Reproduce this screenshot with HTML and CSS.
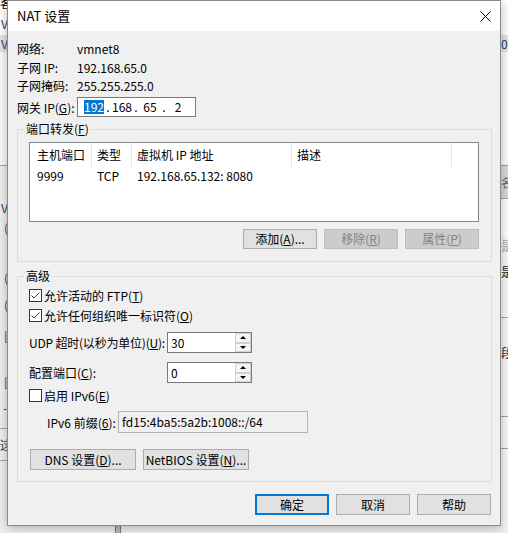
FILE: index.html
```html
<!DOCTYPE html>
<html lang="zh-CN">
<head>
<meta charset="utf-8">
<title>NAT 设置</title>
<link rel="stylesheet" href="styles.css">
</head>
<body>
<div class="desk">
  <div class="backwin">
    <div class="bw-top">
      <div class="bw-l bw-cut">客</div>
      <div class="bw-l bw-blue bw-v1">V</div>
    </div>
    <div class="bw-band">
      <span class="bw-l bw-blue">V</span>
      <span class="bw-r">0</span>
    </div>
    <div class="bw-white"></div>
    <div class="bw-sep"></div>
    <div class="bw-mid">
      <div class="bw-lcol">
        <div class="lc lc-v bw-blue">V</div>
        <div class="lc lc-p1">(</div>
        <div class="lc lc-p2">(</div>
        <div class="lc lc-p3">(</div>
        <div class="lc lc-b1">[</div>
        <div class="lc lc-b2">[</div>
        <div class="lc lc-d">-</div>
        <div class="lc-zh">这</div>
      </div>
      <div class="bw-rcol">
        <div class="rc rc-name">名</div>
        <div class="rc rc-gap"></div>
        <div class="rc rc-faded">是</div>
        <div class="rc rc-dark">是</div>
        <div class="rc rc-line"></div>
        <div class="rc rc-seg">段</div>
        <div class="rc rc-line2"></div>
        <div class="rc rc-line3"></div>
      </div>
    </div>
    <div class="bw-bottom"><span class="bw-bar"></span></div>
  </div>

  <div class="dialog">
    <div class="titlebar">
      <span class="title">NAT 设置</span>
      <svg class="close" width="11" height="11" viewBox="0 0 11 11"><path d="M0.5 0.5L10.5 10.5M10.5 0.5L0.5 10.5" stroke="#000" stroke-width="1" fill="none"/></svg>
    </div>
    <div class="content">
      <div class="info">
        <div class="kv r1"><span class="k">网络:</span><span class="v">vmnet8</span></div>
        <div class="kv r2"><span class="k">子网 IP:</span><span class="v">192.168.65.0</span></div>
        <div class="kv r3"><span class="k">子网掩码:</span><span class="v">255.255.255.0</span></div>
        <div class="kv r4"><span class="k">网关 IP(<u>G</u>):</span>
          <div class="ipbox"><span class="oct sel">192</span><span class="dot">.</span><span class="oct">168</span><span class="dot">.</span><span class="oct">65</span><span class="dot">.</span><span class="oct">2</span></div>
        </div>
      </div>

      <fieldset class="group g1">
        <legend>端口转发(<u>F</u>)</legend>
        <div class="list">
          <div class="lrow head"><span>主机端口</span><span>类型</span><span>虚拟机 IP 地址</span><span>描述</span><span class="last"></span></div>
          <div class="lrow item"><span>9999</span><span>TCP</span><span>192.168.65.132: 8080</span><span></span><span class="last"></span></div>
        </div>
        <div class="btnrow">
          <button class="btn">添加(<u>A</u>)...</button>
          <button class="btn" disabled>移除(<u>R</u>)</button>
          <button class="btn" disabled>属性(<u>P</u>)</button>
        </div>
      </fieldset>

      <fieldset class="group g2">
        <legend>高级</legend>
        <div class="cbrow cb1">
          <span class="cb"><svg width="11" height="11" viewBox="0 0 11 11"><path d="M1.5 5.5L4 8L9.5 2.5" stroke="#444" stroke-width="1" fill="none"/></svg></span>
          <span class="cblabel">允许活动的 FTP(<u>T</u>)</span>
        </div>
        <div class="cbrow cb2">
          <span class="cb"><svg width="11" height="11" viewBox="0 0 11 11"><path d="M1.5 5.5L4 8L9.5 2.5" stroke="#444" stroke-width="1" fill="none"/></svg></span>
          <span class="cblabel">允许任何组织唯一标识符(<u>O</u>)</span>
        </div>
        <div class="formrow fr-udp">
          <span class="flabel tight">UDP 超时(以秒为单位)(<u>U</u>):</span>
          <div class="spin"><span class="spinval">30</span><span class="spinbtns"><span class="sb up"></span><span class="sb down"></span></span></div>
        </div>
        <div class="formrow fr-port">
          <span class="flabel">配置端口(<u>C</u>):</span>
          <div class="spin"><span class="spinval">0</span><span class="spinbtns"><span class="sb up"></span><span class="sb down"></span></span></div>
        </div>
        <div class="cbrow cb3">
          <span class="cb"></span>
          <span class="cblabel">启用 IPv6(<u>E</u>)</span>
        </div>
        <div class="formrow fr-v6">
          <span class="flabel v6label">IPv6 前缀(<u>6</u>):</span>
          <div class="v6box">fd15:4ba5:5a2b:1008::/64</div>
        </div>
        <div class="btnrow2">
          <button class="btn wide">DNS 设置(<u>D</u>)...</button>
          <button class="btn wide">NetBIOS 设置(<u>N</u>)...</button>
        </div>
      </fieldset>

      <div class="footer">
        <button class="btn default">确定</button>
        <button class="btn">取消</button>
        <button class="btn">帮助</button>
      </div>
    </div>
  </div>
</div>
</body>
</html>
```

FILE: styles.css
```css
* { box-sizing: border-box; }
html, body { margin: 0; padding: 0; }
body {
  width: 508px;
  height: 533px;
  overflow: hidden;
  font-family: "Noto Sans CJK SC", "Liberation Sans", sans-serif;
  font-size: 12px;
  color: #000;
  background: #f0f0f0;
}
u { text-decoration: underline; text-underline-offset: 1px; }

.desk { position: relative; width: 508px; height: 533px; overflow: hidden; }

/* ---------- background window (mostly hidden behind the dialog) ---------- */
.backwin { display: flex; flex-direction: column; width: 508px; height: 533px; }
.bw-top { height: 35px; background: #fff; }
.bw-l { display: block; padding-left: 1px; white-space: nowrap; }
.bw-cut { height: 12px; line-height: 12px; margin-top: -3px; padding-left: 0; }
.bw-v1 { margin-top: 8px; line-height: 14px; }
.bw-blue { color: #1d3f7a; }
.bw-band { height: 17px; background: #e3e3e3; display: flex; justify-content: space-between; align-items: center; }
.bw-r { padding-left: 1px; width: 8px; color: #1d3f7a; }
.bw-white { height: 113px; background: #fbfbfb; }
.bw-sep { height: 1px; background: #a0a0a0; }
.bw-mid { height: 359px; display: flex; justify-content: space-between; background: #f0f0f0; }
.bw-lcol { width: 8px; display: flex; flex-direction: column; color: #444; }
.lc { line-height: 14px; padding-left: 4px; white-space: nowrap; }
.lc-v { margin-top: 35px; padding-left: 1px; }
.lc-p1 { margin-top: 6px; }
.lc-p2 { margin-top: 36px; }
.lc-p3 { margin-top: 13px; }
.lc-b1 { margin-top: 17px; }
.lc-b2 { margin-top: 32px; }
.lc-d { margin-top: 12px; padding-left: 3px; }
.lc-zh { margin-top: 13px; height: 33px; line-height: 31px; border-top: 1px solid #a8a8a8; border-bottom: 1px solid #a8a8a8; padding-left: 0; white-space: nowrap; }
.bw-rcol { width: 8px; display: flex; flex-direction: column; background: #f7f7f7; }
.rc { padding-left: 1px; white-space: nowrap; }
.rc-name { height: 33px; line-height: 33px; background: #d9d9d9; color: #666; border-bottom: 1px solid #a0a0a0; }
.rc-gap { height: 38px; background: #fff; }
.rc-faded { line-height: 18px; color: #a8a8a8; }
.rc-dark { margin-top: 8px; line-height: 18px; color: #222; }
.rc-line { margin-top: 36px; height: 1px; background: #a0a0a0; }
.rc-seg { margin-top: 28px; line-height: 14px; color: #222; }
.rc-line2 { margin-top: 56px; height: 1px; background: #a0a0a0; }
.rc-line3 { margin-top: 31px; height: 1px; background: #a0a0a0; }
.bw-bottom { height: 8px; background: #f0f0f0; padding-left: 115px; }
.bw-bar { display: block; width: 6px; height: 8px; background: #b9bdc9; border-left: 1px solid #6e7382; border-right: 1px solid #6e7382; }

/* ---------- dialog ---------- */
.dialog {
  position: absolute;
  left: 7px;
  top: 0;
  width: 494px;
  height: 526px;
  border: 1px solid #8b8b8b;
  background: #f0f0f0;
  box-shadow: 0 2px 10px rgba(0, 0, 0, 0.28);
  display: flex;
  flex-direction: column;
}
.titlebar {
  height: 30px;
  background: #fff;
  display: flex;
  align-items: center;
  justify-content: space-between;
  padding: 0 9px 0 9px;
}
.title { font-size: 13px; line-height: 16px; }
.close { display: block; }

.content { padding-top: 8px; display: flex; flex-direction: column; }

.info { margin-left: 9px; display: flex; flex-direction: column; }
.kv { display: flex; align-items: center; }
.k { width: 60px; flex: none; white-space: nowrap; }
.r1 { height: 19px; }
.r2 { height: 18px; }
.r3 { height: 18px; }
.r4 { height: 20px; margin-top: 3px; }
.ipbox {
  width: 119px;
  height: 20px;
  border: 1px solid #7a7a7a;
  background: #fff;
  display: flex;
  align-items: center;
  padding-left: 6px;
}
.oct { width: 20px; text-align: center; line-height: 14px; }
.oct.sel { background: #0078d7; color: #fff; }
.dot { width: 8px; text-align: center; line-height: 14px; }

.group {
  margin: 0 8px 0 9px;
  width: 475px;
  border: 1px solid #dcdcdc;
  min-inline-size: 0;
}
.group legend {
  line-height: 16px;
  padding: 0 2px;
  margin-left: -5px;
}
.g1 { margin-top: 4px; padding: 5px 12px 12px 11px; }
.g2 { margin-top: 6px; padding: 1px 12px 11px 11px; }

.list {
  width: 450px;
  height: 80px;
  border: 1px solid #828790;
  background: #fff;
}
.lrow { display: grid; grid-template-columns: 62px 40px 160px 160px 1fr; }
.lrow span { padding-left: 5px; white-space: nowrap; }
.lrow span:first-child { padding-left: 7px; }
.head { height: 24px; line-height: 24px; }
.head span { border-right: 1px solid #e5e5e5; }
.head span.last { border-right: 0; }
.item { height: 18px; line-height: 18px; }

.btnrow { margin-top: 7px; display: flex; justify-content: flex-end; gap: 7px; }
.btn {
  width: 74px;
  height: 20px;
  padding: 0;
  margin: 0;
  border: 1px solid #adadad;
  background: #e1e1e1;
  font-family: inherit;
  font-size: 12px;
  line-height: 18px;
  color: #000;
  border-radius: 0;
}
.btn:disabled { background: #cccccc; border-color: #bfbfbf; color: #838383; }
.btn.wide { width: 106px; height: 21px; }
.btn.default { border: 2px solid #0078d7; }

.cbrow { height: 20px; display: flex; align-items: center; }
.cb {
  width: 13px;
  height: 13px;
  border: 1px solid #333;
  background: #fff;
  display: flex;
  align-items: center;
  justify-content: center;
  flex: none;
}
.cb svg { display: block; }
.cblabel { margin-left: 2px; white-space: nowrap; }
.cb3 { margin-top: 2px; }

.formrow { display: flex; align-items: center; }
.flabel { width: 138px; flex: none; white-space: nowrap; }
.flabel.tight { letter-spacing: -0.2px; }
.fr-udp { margin-top: 7px; height: 21px; }
.fr-port { margin-top: 9px; height: 21px; }
.spin {
  width: 85px;
  height: 21px;
  border: 1px solid #7a7a7a;
  background: #fff;
  display: flex;
}
.spinval { flex: 1; padding-left: 3px; line-height: 19px; }
.spinbtns { width: 16px; display: flex; flex-direction: column; }
.sb {
  flex: 1;
  border: 1px solid #d2d2d2;
  background: #f4f4f4;
  display: flex;
  align-items: center;
  justify-content: center;
}
.sb::before { content: ""; width: 0; height: 0; border-left: 3px solid transparent; border-right: 3px solid transparent; }
.sb.up::before { border-bottom: 3px solid #000; }
.sb.down::before { border-top: 3px solid #000; }

.fr-v6 { margin-top: 6px; height: 22px; }
.v6label { width: 71px; margin-left: 18px; }
.v6box {
  width: 190px;
  height: 22px;
  border: 1px solid #b4b4b4;
  background: #f0f0f0;
  padding-left: 3px;
  line-height: 20px;
  white-space: nowrap;
}

.btnrow2 { margin-top: 16px; margin-left: 1px; display: flex; gap: 7px; }

.footer { margin: 12px 9px 0 0; display: flex; justify-content: flex-end; gap: 7px; }
.footer .btn { height: 21px; }
```
